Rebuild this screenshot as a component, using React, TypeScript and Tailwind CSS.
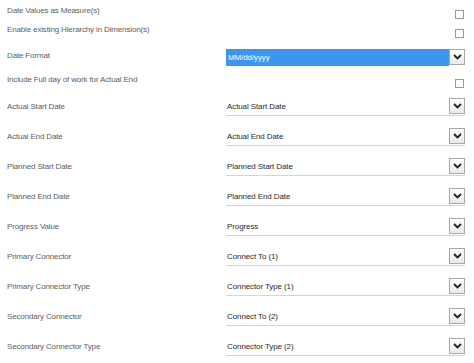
import React from "react";

const font = { fontFamily: '"Liberation Sans", Arial, sans-serif' };

function Checkbox({ top }: { top: string }) {
  return (
    <div className={`ml-auto mr-[10px] ${top} w-[9px] h-[9px] border border-[#9a9a9a] bg-white`} />
  );
}

function Chevron() {
  return (
    <div className="w-[16px] h-[16px] border border-[#a8a8a8] bg-gradient-to-b from-[#ffffff] to-[#e9e9e9] flex items-center justify-center shrink-0">
      <svg width="9" height="6" viewBox="0 0 9 6">
        <path d="M1 1 L4.5 4.5 L8 1" fill="none" stroke="#222" strokeWidth="1.8" />
      </svg>
    </div>
  );
}

function SelectRow({ label, value }: { label: string; value: string }) {
  return (
    <div className="flex h-[30px] items-start">
      <div className="w-[219px] pt-[10px] text-[8px] leading-[10px] tracking-[-0.15px] text-[#606060]">{label}</div>
      <div className="mt-[6px] w-[239px] h-[18px] border-b border-[#d4d4d4] flex items-start">
        <div className="flex-1 h-[17px] flex items-center pl-[1px] text-[8px] leading-[10px] tracking-[-0.1px] text-[#2a2a2a]">{value}</div>
        <Chevron />
      </div>
    </div>
  );
}

export default function App() {
  const rows: [string, string][] = [
    ["Actual Start Date", "Actual Start Date"],
    ["Actual End Date", "Actual End Date"],
    ["Planned Start Date", "Planned Start Date"],
    ["Planned End Date", "Planned End Date"],
    ["Progress Value", "Progress"],
    ["Primary Connector", "Connect To (1)"],
    ["Primary Connector Type", "Connector Type (1)"],
    ["Secondary Connector", "Connect To (2)"],
    ["Secondary Connector Type", "Connector Type (2)"],
  ];
  const lbl = "text-[8px] leading-[10px] tracking-[-0.15px] text-[#606060]";
  return (
    <div className="w-[474px] h-[363px] bg-white pl-[7px] overflow-hidden" style={font}>
      <div className="flex h-[21px] items-start">
        <div className={`pt-[6px] ${lbl}`}>Date Values as Measure(s)</div>
        <Checkbox top="mt-[10px]" />
      </div>
      <div className="flex h-[22px] items-start">
        <div className={`pt-[4px] ${lbl}`}>Enable existing Hierarchy in Dimension(s)</div>
        <Checkbox top="mt-[8px]" />
      </div>
      <div className="flex h-[28px] items-start">
        <div className={`w-[219px] pt-[8px] ${lbl}`}>Date Format</div>
        <div className="mt-[6px] w-[239px] h-[17px] flex items-stretch">
          <div className="flex-1 bg-[#3c95ee] flex items-center pl-[2px] text-[8px] leading-[10px] tracking-[-0.1px] text-white">MM/dd/yyyy</div>
          <Chevron />
        </div>
      </div>
      <div className="flex h-[21px] items-start">
        <div className={`pt-[4px] ${lbl}`}>Include Full day of work for Actual End</div>
        <Checkbox top="mt-[8px]" />
      </div>
      {rows.map(([l, v]) => (
        <SelectRow key={l} label={l} value={v} />
      ))}
    </div>
  );
}
